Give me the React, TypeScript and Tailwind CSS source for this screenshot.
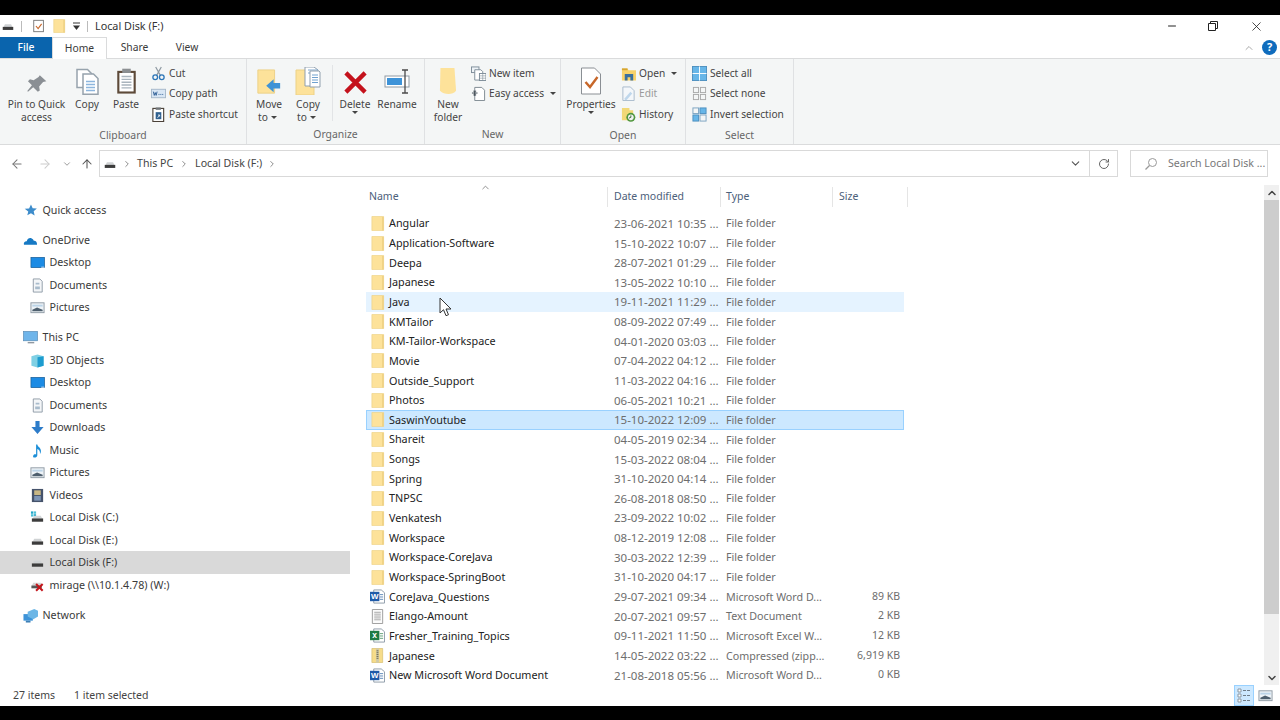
import { ArrowLeft, ArrowRight, ArrowUp, ChevronDown, ChevronRight, ChevronUp, Minus, RotateCw, X } from "lucide-react";

const files = [
  { name: "Angular", date: "23-06-2021 10:35 ...", type: "File folder", size: "", icon: "folder" },
  { name: "Application-Software", date: "15-10-2022 10:07 ...", type: "File folder", size: "", icon: "folder" },
  { name: "Deepa", date: "28-07-2021 01:29 ...", type: "File folder", size: "", icon: "folder" },
  { name: "Japanese", date: "13-05-2022 10:10 ...", type: "File folder", size: "", icon: "folder" },
  { name: "Java", date: "19-11-2021 11:29 ...", type: "File folder", size: "", icon: "folder" },
  { name: "KMTailor", date: "08-09-2022 07:49 ...", type: "File folder", size: "", icon: "folder" },
  { name: "KM-Tailor-Workspace", date: "04-01-2020 03:03 ...", type: "File folder", size: "", icon: "folder" },
  { name: "Movie", date: "07-04-2022 04:12 ...", type: "File folder", size: "", icon: "folder" },
  { name: "Outside_Support", date: "11-03-2022 04:16 ...", type: "File folder", size: "", icon: "folder" },
  { name: "Photos", date: "06-05-2021 10:21 ...", type: "File folder", size: "", icon: "folder" },
  { name: "SaswinYoutube", date: "15-10-2022 12:09 ...", type: "File folder", size: "", icon: "folder" },
  { name: "Shareit", date: "04-05-2019 02:34 ...", type: "File folder", size: "", icon: "folder" },
  { name: "Songs", date: "15-03-2022 08:04 ...", type: "File folder", size: "", icon: "folder" },
  { name: "Spring", date: "31-10-2020 04:14 ...", type: "File folder", size: "", icon: "folder" },
  { name: "TNPSC", date: "26-08-2018 08:50 ...", type: "File folder", size: "", icon: "folder" },
  { name: "Venkatesh", date: "23-09-2022 10:02 ...", type: "File folder", size: "", icon: "folder" },
  { name: "Workspace", date: "08-12-2019 12:08 ...", type: "File folder", size: "", icon: "folder" },
  { name: "Workspace-CoreJava", date: "30-03-2022 12:39 ...", type: "File folder", size: "", icon: "folder" },
  { name: "Workspace-SpringBoot", date: "31-10-2020 04:17 ...", type: "File folder", size: "", icon: "folder" },
  { name: "CoreJava_Questions", date: "29-07-2021 09:34 ...", type: "Microsoft Word D...", size: "89 KB", icon: "word" },
  { name: "Elango-Amount", date: "20-07-2021 09:57 ...", type: "Text Document", size: "2 KB", icon: "text" },
  { name: "Fresher_Training_Topics", date: "09-11-2021 11:50 ...", type: "Microsoft Excel W...", size: "12 KB", icon: "excel" },
  { name: "Japanese", date: "14-05-2022 03:22 ...", type: "Compressed (zipp...", size: "6,919 KB", icon: "zip" },
  { name: "New Microsoft Word Document", date: "21-08-2018 05:56 ...", type: "Microsoft Word D...", size: "0 KB", icon: "word" },
];

const nav = [
  { label: "Quick access", icon: "star", top: true },
  { gap: true },
  { label: "OneDrive", icon: "cloud", top: true },
  { label: "Desktop", icon: "desktop" },
  { label: "Documents", icon: "docs" },
  { label: "Pictures", icon: "pics" },
  { gap: true },
  { label: "This PC", icon: "pc", top: true },
  { label: "3D Objects", icon: "cube" },
  { label: "Desktop", icon: "desktop" },
  { label: "Documents", icon: "docs" },
  { label: "Downloads", icon: "down" },
  { label: "Music", icon: "music" },
  { label: "Pictures", icon: "pics" },
  { label: "Videos", icon: "video" },
  { label: "Local Disk (C:)", icon: "diskc" },
  { label: "Local Disk (E:)", icon: "disk" },
  { label: "Local Disk (F:)", icon: "disk", active: true },
  { label: "mirage (\\\\10.1.4.78) (W:)", icon: "netdisk" },
  { gap: true },
  { label: "Network", icon: "network", top: true },
];

function Glyph({ name, size = 16 }: { name: string; size?: number }) {
  const art: Record<string, React.ReactNode> = {
    folder: (
      <>
        <path d="M2 .5h12.500v15H2z" fill="#fde29a" stroke="#ecd186" strokeWidth=".7" />
        <path d="M13 1h1.500v14.500H13z" fill="#edcf80" />
      </>
    ),
    word: (
      <>
        <path d="M4 1h8l3.500 3v11H4z" fill="#fff" stroke="#8d9aa8" />
        <path d="M10.500 6h3.500M10.500 8.500h3.500M10.500 11h3.500" stroke="#5b86b8" />
        <rect x="0" y="3" width="10" height="10" fill="#1f5aa8" />
        <text x="5" y="11" fontSize="8.500" fontWeight="700" fill="#fff" textAnchor="middle" fontFamily="Liberation Sans, sans-serif">W</text>
      </>
    ),
    excel: (
      <>
        <path d="M4 1h8l3.500 3v11H4z" fill="#fff" stroke="#8d9aa8" />
        <path d="M10.500 6h3.500M10.500 8.500h3.500M10.500 11h3.500" stroke="#5e9e75" />
        <rect x="0" y="3" width="10" height="10" fill="#1d7a43" />
        <text x="5" y="11" fontSize="9" fontWeight="700" fill="#fff" textAnchor="middle" fontFamily="Liberation Sans, sans-serif">x</text>
      </>
    ),
    text: (
      <>
        <path d="M2.500 .5h11v15h-11z" fill="#fbfbfb" stroke="#9a9a9a" />
        <path d="M4.500 3.500h7M4.500 5.500h7M4.500 7.500h7M4.500 9.500h7M4.500 11.500h7" stroke="#a5a5a5" />
      </>
    ),
    zip: (
      <>
        <path d="M2 .5h11.500v15H2z" fill="#f6dc8a" stroke="#d5bb6a" strokeWidth=".7" />
        <path d="M6.500 .5h3v15h-3z" fill="#cfc9a8" />
        <path d="M7 3h2M7 5h2M7 7h2M7 9h2M7 11h2" stroke="#6f6a4c" />
      </>
    ),
    star: (
      <path d="M8.500 1.500l1.800 4 4.500.400-3.400 3 1 4.500-3.900-2.400L4.600 13l1-4L1.800 6l4.700-.2z" fill="#3d8ccb" />
    ),
    cloud: <path d="M1 12.500c-.6-2.500 1-4 3-3.800C4.800 6 7 4.800 9.300 5.800c1.300.5 2 1.500 2.200 2.500 2-.3 3.600 1.200 3.500 4.200z" fill="#1679c4" />,
    desktop: (
      <>
        <rect x="1" y="2.500" width="14.500" height="11" fill="#1c8be4" stroke="#14578f" strokeWidth=".7" />
        <path d="M12 13h3" stroke="#dfeaf4" />
      </>
    ),
    docs: (
      <>
        <path d="M3.500 1h7l2.500 2.500V15h-9.500z" fill="#f4f6f8" stroke="#8f9ba6" />
        <path d="M6 5h4v2H6zM5.500 9h5v3h-5z" fill="#a8bbcc" />
      </>
    ),
    pics: (
      <>
        <rect x="1" y="3" width="14" height="10.500" fill="#eef3f7" stroke="#8d99a3" />
        <path d="M2.500 10.500l5-2.500 6 2.500v1.500h-11z" fill="#4e5f6e" />
        <path d="M2.500 5h11v2h-11z" fill="#bcd4e8" />
      </>
    ),
    pc: (
      <>
        <rect x="0.500" y="1.500" width="15" height="10" fill="#6fb5ea" stroke="#5789b2" strokeWidth=".7" />
        <path d="M5 13.500h7" stroke="#8f98a1" strokeWidth="1.500" />
      </>
    ),
    cube: (
      <>
        <path d="M1.500 3.500L8 1.500l6.500 2v10L8 15.500l-6.500-2z" fill="#7fd0e4" />
        <path d="M8 4.500l6.500-1v10L8 15.500z" fill="#1d9ccf" />
      </>
    ),
    down: <path d="M5.800 1h4.400v6.500h4.300L8 15 1.500 7.500h4.300z" fill="#2d7cc9" />,
    music: <path d="M6.500 1.500h1.300c.5 2.800 4.500 3.400 3.800 8-.2 1-.7 1.800-1 2.200.4-2.600-.6-4.500-2.800-5.300V13c0 1.500-1.500 2.500-3 2.500S3 14.500 3.500 13.300c.5-1.200 2-1.500 3-1z" fill="#1d8fd8" />,
    video: (
      <>
        <rect x="2" y="1" width="12" height="14" fill="#46536b" />
        <rect x="4.500" y="2.500" width="7" height="5" fill="#c8b784" />
        <rect x="4.500" y="8.500" width="7" height="5" fill="#7d95b6" />
      </>
    ),
    disk: (
      <>
        <path d="M3 9l1.500-3h7L13 9z" fill="#cfd2d4" />
        <rect x="2" y="9" width="12" height="3.500" fill="#3c3c3c" />
      </>
    ),
    diskc: (
      <>
        <rect x="1" y="1.500" width="2.500" height="2.500" fill="#21a7c9" />
        <rect x="4" y="1.500" width="2.500" height="2.500" fill="#4cc0d6" />
        <rect x="1" y="4.500" width="2.500" height="2.500" fill="#4cc0d6" />
        <rect x="4" y="4.500" width="2.500" height="2.500" fill="#21a7c9" />
        <path d="M3 9l1.500-3h7L13 9z" fill="#d3d6d8" />
        <rect x="2" y="9" width="12" height="3.500" fill="#3c3c3c" />
      </>
    ),
    netdisk: (
      <>
        <path d="M2 8l1.500-3h8L13 8z" fill="#d7d7d7" />
        <rect x="1.500" y="8" width="11" height="3" fill="#575757" />
        <path d="M6.500 6.500l7 7M13.500 6.500l-7 7" stroke="#c4161c" strokeWidth="2.200" />
      </>
    ),
    network: (
      <>
        <rect x="0.500" y="6.500" width="10" height="7" fill="#3d93d8" />
        <path d="M3 13.500h5v2H3z" fill="#3d7fb5" />
        <path d="M5 4l7-3 4 2v6l-5 3-6-3z" fill="#6cb6e6" />
      </>
    ),
    pin: <path d="M10.500 1l5 4.500-2.500.500-3 3.500.500 3-1.500 1-3.500-3.500-4 3.500-.500-.500 3.500-4.500L1.500 5.500 3 4l2.800.800 3.800-2.500z" fill="#8a8f94" />,
    copy: (
      <>
        <path d="M2 1h7l3 3v9H2z" fill="#fff" stroke="#97a3ad" />
        <path d="M6 5h7l3 3v10.500H6z" fill="#fff" stroke="#97a3ad" transform="translate(0 -1)" />
        <path d="M8 10h6v1H8zM8 12h6v1H8zM8 14h6v1H8zM8 8h6v1H8z" fill="#8db6de" transform="translate(0 .5)" />
      </>
    ),
    paste: (
      <>
        <rect x="1.500" y="2" width="13" height="16" fill="#5d4a39" />
        <rect x="3" y="3.500" width="10" height="13" fill="#fff" />
        <rect x="5" y="0.500" width="6" height="3" fill="#8b8f92" />
        <path d="M4.500 6h7M4.500 8h7M4.500 10h7M4.500 12h7M4.500 14h7" stroke="#a9b4bd" />
      </>
    ),
    cut: (
      <>
        <path d="M5 1l5 9M11 1L6 10" stroke="#8f9aa3" strokeWidth="1.300" fill="none" />
        <circle cx="4.500" cy="12" r="2.500" fill="none" stroke="#2c76b8" strokeWidth="1.400" />
        <circle cx="11.500" cy="12" r="2.500" fill="none" stroke="#2c76b8" strokeWidth="1.400" />
      </>
    ),
    copypath: (
      <>
        <rect x="0.500" y="3.500" width="15" height="9" fill="#d8e6f4" stroke="#a4b7c9" />
        <path d="M2.500 6l1 4 1-3 1 3 1-4" stroke="#2f5f95" fill="none" />
        <path d="M8 9h1M10 9h1M12 9h1" stroke="#2f5f95" />
      </>
    ),
    shortcut: (
      <>
        <rect x="2" y="1.500" width="11.500" height="14" fill="#fff" stroke="#4a4038" strokeWidth="1.200" />
        <rect x="5" y="0.500" width="5.500" height="2.500" fill="#6f7478" />
        <rect x="5" y="5.500" width="6" height="7.500" fill="#31618f" />
        <path d="M7 11.500l2-3M7.500 8.500H9.200v1.700" stroke="#fff" fill="none" strokeWidth=".8" />
      </>
    ),
    moveto: (
      <>
        <path d="M1 1h18v25H1z" fill="#fde29a" stroke="#ecd186" />
        <path d="M10 18l8-7v4h7v6h-7v4z" fill="#3f93d6" />
      </>
    ),
    copyto: (
      <>
        <path d="M1 3h18v25H1z" fill="#fde29a" stroke="#ecd186" />
        <path d="M10 0h9l4 3v16H10z" fill="#fff" stroke="#8f9fae" />
        <path d="M13 3h10M13 6h10" stroke="#7ea7cd" />
        <path d="M15 4h9l1 1v15H15z" fill="#fff" stroke="#8f9fae" />
        <path d="M17 8h6M17 10.500h6M17 13h6M17 15.500h6" stroke="#6fa1cf" />
      </>
    ),
    del: <path d="M3 3l20 20M23 3L3 23" stroke="#c4121c" strokeWidth="4.500" />,
    rename: (
      <>
        <rect x="1" y="9" width="24" height="11" fill="#fff" stroke="#8f9aa3" />
        <rect x="3" y="11" width="15" height="7" fill="#3d93d8" />
        <path d="M21 3v23M18 3h6M18 26h6" stroke="#4b4b4b" strokeWidth="1.300" />
      </>
    ),
    newfolder: <path d="M2 1h13l1.500 21c-3 4-11 4-15 0z" fill="#fde29a" />,
    newitem: (
      <>
        <rect x="0.500" y="1" width="8" height="6" fill="#eef3f7" stroke="#7d8c98" />
        <path d="M4 4h6.500l2 2v9H4z" fill="#fff" stroke="#7d8c98" />
        <rect x="9" y="8" width="7" height="7.500" fill="#fff" stroke="#7d8c98" />
        <path d="M9 10.500h7M9 13h7M12.500 8v7.500" stroke="#7d8c98" strokeWidth=".6" />
      </>
    ),
    easy: (
      <>
        <path d="M4 1.500h7.500l3 3V15.500H4z" fill="#fff" stroke="#7b868f" />
        <path d="M1 7.500h6M2.500 5.500h3M2.500 9.500h3M4 5.500v5" stroke="#3f4a52" />
      </>
    ),
    props: (
      <>
        <path d="M1 1h13l6 6v20H1z" fill="#fff" stroke="#8a8f94" />
        <path d="M5 15l4.500 5L17 10" stroke="#c7672a" strokeWidth="2.400" fill="none" />
      </>
    ),
    open: (
      <>
        <path d="M1 3h6l1 1.500h8v11H1z" fill="#f7d26b" />
        <path d="M1 2.500h6v2H1z" fill="#d6a630" />
        <path d="M4 8.500h9v7h-3v-3.500H7v3.500H4z" fill="#3a6f9e" />
      </>
    ),
    edit: (
      <>
        <path d="M2 1h8l4 4v10.500H2z" fill="#f4f7fa" stroke="#a8bacb" />
        <path d="M4 13l6-7 2 2-6 7H4z" fill="#bfd7ec" />
      </>
    ),
    history: (
      <>
        <path d="M1 1h8v2.500h4V14H1z" fill="#f1d877" />
        <circle cx="10.500" cy="11" r="4.800" fill="#52983f" />
        <circle cx="10.500" cy="11" r="3" fill="#f2f2f2" />
        <path d="M10.500 9v2l-2 .8" stroke="#33622a" fill="none" />
      </>
    ),
    selall: (
      <>
        <rect x="0.500" y="0.500" width="15" height="15" fill="#67b6e8" stroke="#4d8fbf" />
        <path d="M8 .5v15M.5 8h15" stroke="#fff" />
      </>
    ),
    selnone: (
      <>
        <rect x="1.500" y="1.500" width="5.500" height="5.500" fill="none" stroke="#a9a9a9" />
        <rect x="9" y="1.500" width="5.500" height="5.500" fill="none" stroke="#a9a9a9" />
        <rect x="1.500" y="9" width="5.500" height="5.500" fill="none" stroke="#a9a9a9" />
        <rect x="9" y="9" width="5.500" height="5.500" fill="none" stroke="#a9a9a9" />
      </>
    ),
    invert: (
      <>
        <rect x="1" y="1" width="6" height="6" fill="none" stroke="#7aa2c0" />
        <rect x="8.500" y="1" width="6.500" height="6" fill="#67b6e8" stroke="#4d8fbf" />
        <rect x="1" y="8.500" width="6" height="6.500" fill="#67b6e8" stroke="#4d8fbf" />
        <rect x="8.500" y="8.500" width="6.500" height="6.500" fill="none" stroke="#7aa2c0" />
      </>
    ),
    check: (
      <>
        <rect x="2" y="1.500" width="11" height="13" fill="#fff" stroke="#6f6f6f" />
        <path d="M4.500 8l2.500 3 4-5.500" stroke="#c7672a" strokeWidth="1.300" fill="none" />
      </>
    ),
  };
  const boxes: Record<string, string> = {
    moveto: "0 0 26 28",
    copyto: "0 0 26 28",
    del: "0 0 26 26",
    rename: "0 0 26 28",
    newfolder: "0 0 18 26",
    props: "0 0 21 28",
    copy: "0 0 18 18",
    paste: "0 0 16 19",
  };
  return (
    <svg width={size} height={size} viewBox={boxes[name] ?? "0 0 16 16"} className="shrink-0">
      {art[name]}
    </svg>
  );
}

function IconSlot({ icon, size }: { icon: string; size: number }) {
  return (
    <div className="h-[39px] pb-[3px] flex items-end justify-center">
      <Glyph name={icon} size={size} />
    </div>
  );
}

function Big({ icon, size, lines, w, caret }: { icon: string; size: number; lines: string[]; w: string; caret?: boolean }) {
  return (
    <div className={`${w} shrink-0 flex flex-col items-center`}>
      <IconSlot icon={icon} size={size} />
      {lines.map((l) => (
        <div key={l} className="h-[13px] leading-[13px] whitespace-nowrap flex items-center">{l}</div>
      ))}
      {caret && <Caret />}
    </div>
  );
}

function Caret() {
  return <span className="inline-block w-0 h-0 border-x-[3px] border-x-transparent border-t-[3px] border-t-[#444] mx-[3px]" />;
}

function Small({ icon, label, caret, dim }: { icon: string; label: string; caret?: boolean; dim?: boolean }) {
  return (
    <div className={`h-[20.500px] flex items-center gap-[3px] whitespace-nowrap ${dim ? "text-[#9a9a9a]" : ""}`}>
      <Glyph name={icon} size={15} />
      <span>{label}</span>
      {caret && <Caret />}
    </div>
  );
}

function Group({ w, label, children }: { w: string; label: string; children: React.ReactNode }) {
  return (
    <div className={`${w} shrink-0 border-r border-[#dfe1e3] flex flex-col`}>
      <div className="h-[67px] flex items-start">{children}</div>
      <div className="text-center text-[#666] text-[10.400px] leading-[21px]">{label}</div>
    </div>
  );
}

export default function App() {
  return (
    <div className="w-[1280px] h-[720px] overflow-hidden bg-white flex flex-col relative text-[10.800px] text-[#3a3a3a] font-['Noto_Sans',sans-serif]">
      <div className="h-[15px] bg-black shrink-0" />

      {/* title bar */}
      <div className="h-[22px] shrink-0 flex items-center relative">
        <div className="ml-[1px] w-[14px]"><Glyph name="disk" size={14} /></div>
        <div className="ml-[6px] w-px h-[11px] bg-[#bbb]" />
        <div className="ml-[10px]"><Glyph name="check" size={14} /></div>
        <div className="ml-[6px]"><Glyph name="folder" size={14} /></div>
        <svg width="9" height="9" viewBox="0 0 9 9" className="ml-[6px]">
          <path d="M1 1h7" stroke="#333" />
          <path d="M1 3.500h7L4.500 8z" fill="#333" />
        </svg>
        <div className="ml-[6px] w-px h-[11px] bg-[#bbb]" />
        <div className="ml-[7px] text-[#333]">Local Disk (F:)</div>
        <div className="ml-auto flex items-center text-[#222]">
          <Minus size={12} className="mr-[30px]" />
          <svg width="10" height="10" viewBox="0 0 10 10" className="mr-[31px]">
            <path d="M.5 2.500h7v7h-7zM2.500 2.500v-2h7v7h-2" fill="none" stroke="#222" />
          </svg>
          <X size={15} strokeWidth={1.300} className="mr-[16px]" />
        </div>
      </div>

      {/* tabs */}
      <div className="h-[22px] shrink-0 flex items-stretch border-b border-[#dadbdc] relative text-[10.300px]">
        <div className="w-[52px] bg-[#0a64ad] text-white font-medium flex items-center justify-center">File</div>
        <div className="w-[55px] bg-white border-x border-t border-[#dadbdc] -mb-px flex items-center justify-center">Home</div>
        <div className="w-[55px] flex items-center justify-center">Share</div>
        <div className="w-[50px] flex items-center justify-center">View</div>
        <div className="ml-auto flex items-center">
          <ChevronUp size={12} className="text-[#aaa] mr-[7px]" />
          <div className="w-[15px] h-[15px] rounded-full bg-[#0f6cbd] text-white text-[11px] font-bold flex items-center justify-center mr-[3px]">?</div>
        </div>
      </div>

      {/* ribbon */}
      <div className="h-[86px] shrink-0 bg-[#f4f6f6] border-b border-[#dadbdc] flex text-[#444] text-[10.200px]">
        <Group w="w-[247px]" label="Clipboard">
          <Big icon="pin" size={21} lines={["Pin to Quick", "access"]} w="w-[73px]" />
          <Big icon="copy" size={27} lines={["Copy"]} w="w-[28px]" />
          <Big icon="paste" size={27} lines={["Paste"]} w="w-[50px]" />
          <div className="pt-[4px]">
            <Small icon="cut" label="Cut" />
            <Small icon="copypath" label="Copy path" />
            <Small icon="shortcut" label="Paste shortcut" />
          </div>
        </Group>
        <Group w="w-[178px]" label="Organize">
          <div className="w-[44px] shrink-0 flex flex-col items-center">
            <IconSlot icon="moveto" size={26} />
            <div className="h-[13px] leading-[13px]">Move</div>
            <div className="h-[13px] leading-[13px] flex items-center">to<Caret /></div>
          </div>
          <div className="w-[34px] shrink-0 flex flex-col items-center">
            <IconSlot icon="copyto" size={28} />
            <div className="h-[13px] leading-[13px]">Copy</div>
            <div className="h-[13px] leading-[13px] flex items-center">to<Caret /></div>
          </div>
          <div className="w-[8px] shrink-0 h-[56px] mt-[6px] border-r border-[#e2e4e6]" />
          <Big icon="del" size={25} lines={["Delete"]} w="w-[44px]" caret />
          <Big icon="rename" size={28} lines={["Rename"]} w="w-[40px]" />
        </Group>
        <Group w="w-[136px]" label="New">
          <Big icon="newfolder" size={28} lines={["New", "folder"]} w="w-[46px]" />
          <div className="pt-[4px]">
            <Small icon="newitem" label="New item" />
            <Small icon="easy" label="Easy access" caret />
          </div>
        </Group>
        <Group w="w-[125px]" label="Open">
          <Big icon="props" size={28} lines={["Properties"]} w="w-[60px]" caret />
          <div className="pt-[4px]">
            <Small icon="open" label="Open" caret />
            <Small icon="edit" label="Edit" dim />
            <Small icon="history" label="History" />
          </div>
        </Group>
        <Group w="w-[108px]" label="Select">
          <div className="pt-[4px] pl-[6px]">
            <Small icon="selall" label="Select all" />
            <Small icon="selnone" label="Select none" />
            <Small icon="invert" label="Invert selection" />
          </div>
        </Group>
      </div>

      {/* address bar */}
      <div className="h-[40px] shrink-0 flex items-start pt-[5px] text-[10.600px]">
        <div className="w-[99px] h-[27px] flex items-center text-[#777]">
          <ArrowLeft size={14} strokeWidth={1.800} className="ml-[10px]" />
          <ArrowRight size={14} strokeWidth={1.800} className="ml-[14px] text-[#ccc]" />
          <ChevronDown size={10} strokeWidth={2} className="ml-[10px] text-[#888]" />
          <ArrowUp size={14} strokeWidth={1.800} className="ml-[8px] text-[#555]" />
        </div>
        <div className="w-[1019px] h-[27px] border border-[#d9d9d9] flex items-center text-[#444]">
          <div className="ml-[3px]"><Glyph name="disk" size={14} /></div>
          <ChevronRight size={10} className="ml-[5px] text-[#777]" />
          <span className="ml-[5px]">This PC</span>
          <ChevronRight size={10} className="ml-[6px] text-[#777]" />
          <span className="ml-[6px]">Local Disk (F:)</span>
          <ChevronRight size={10} className="ml-[5px] text-[#777]" />
          <ChevronDown size={13} strokeWidth={2} className="ml-auto mr-[7px] text-[#555]" />
          <div className="w-[28px] h-full border-l border-[#d9d9d9] flex items-center justify-center">
            <RotateCw size={12} strokeWidth={2} className="text-[#666]" />
          </div>
        </div>
        <div className="ml-[12px] w-[138px] h-[27px] border border-[#d9d9d9] flex items-center text-[#777]">
          <svg width="14" height="14" viewBox="0 0 14 14" className="ml-[13px] shrink-0">
            <circle cx="8.500" cy="5.500" r="4" fill="none" stroke="#999" />
            <path d="M5.500 8.500L1.500 12.500" stroke="#999" strokeWidth="1.200" />
          </svg>
          <span className="ml-[10px] whitespace-nowrap">Search Local Disk ...</span>
        </div>
      </div>

      {/* main */}
      <div className="flex-1 min-h-0 flex">
        <div className="w-[350px] shrink-0 pt-[13.750px] text-[#3a3a3a] text-[10.700px]">
          {nav.map((n, i) =>
            n.gap ? (
              <div key={i} className="h-[7.500px]" />
            ) : (
              <div key={i} className={`h-[22.500px] flex items-center ${n.top ? "pl-[23px]" : "pl-[30px]"} ${n.active ? "bg-[#d9d9d9]" : ""}`}>
                <Glyph name={n.icon as string} size={15} />
                <span className="ml-[4.500px] whitespace-nowrap">{n.label}</span>
              </div>
            )
          )}
        </div>

        <div className="flex-1 min-w-0 relative pt-[2px]">
          <div className="ml-[16px] h-[20px] flex text-[#4c607a] text-[10.500px]">
            <div className="w-[242px] pl-[3px] border-r border-[#e5e5e5] flex items-center">Name</div>
            <div className="w-[113px] pl-[6px] border-r border-[#e5e5e5] flex items-center">Date modified</div>
            <div className="w-[112px] pl-[5px] border-r border-[#e5e5e5] flex items-center">Type</div>
            <div className="w-[75px] pl-[6px] border-r border-[#e5e5e5] flex items-center">Size</div>
          </div>
          <ChevronUp size={11} className="absolute left-[130px] top-[-3px] text-[#888]" />
          <div className="mt-[6.700px] ml-[16px] w-[538px]">
            {files.map((f, i) => (
              <div
                key={i}
                className={`h-[19.650px] flex items-center ${
                  f.name === "SaswinYoutube" ? "bg-[#cce8ff] outline outline-1 outline-[#99d1ff] -outline-offset-1" : f.name === "Java" ? "bg-[#e5f3ff]" : ""
                }`}
              >
                <div className="w-[248px] pl-[4px] flex items-center text-[#222]">
                  <Glyph name={f.icon} size={15} />
                  <span className="ml-[4px] whitespace-nowrap">{f.name}</span>
                </div>
                <div className="w-[112px] text-[11.500px] text-[#6d6d6d] whitespace-nowrap">{f.date}</div>
                <div className="w-[108px] text-[10.700px] text-[#6d6d6d] whitespace-nowrap">{f.type}</div>
                <div className="w-[66px] text-right text-[10.500px] text-[#6d6d6d] whitespace-nowrap">{f.size}</div>
              </div>
            ))}
          </div>

          {/* mouse pointer */}
          <svg width="14" height="20" viewBox="0 0 14 20" className="absolute left-[89px] top-[112px]">
            <path d="M1 1v15l3.500-3.300 2.500 6 2.500-1-2.500-5.700H12z" fill="#fff" stroke="#333" strokeWidth="1" />
          </svg>
        </div>

        <div className="w-[15px] mr-px shrink-0 bg-[#f0f0f0] flex flex-col items-center">
          <div className="h-[15px] flex items-center"><ChevronUp size={12} strokeWidth={3} className="text-[#444]" /></div>
          <div className="w-full h-[414px] bg-[#cdcdcd]" />
          <div className="mt-auto h-[15px] flex items-center"><ChevronDown size={12} strokeWidth={3} className="text-[#444]" /></div>
        </div>
      </div>

      {/* status bar */}
      <div className="h-[21px] shrink-0 flex items-center text-[#444] text-[10.500px]">
        <span className="ml-[13px] w-[61px]">27 items</span>
        <span>1 item selected</span>
        <div className="ml-auto mr-[5px] flex items-center">
          <div className="w-[20px] h-[21px] bg-[#cce8ff] border border-[#99d1ff] flex items-center justify-center">
            <svg width="15" height="15" viewBox="0 0 15 15">
              <path d="M1 1h3v3H1zM1 6h3v3H1zM1 11h3v3H1z" fill="#fff" stroke="#8a97a3" />
              <path d="M6 2.500h8M6 7.500h8M6 12.500h8" stroke="#6f7c88" strokeDasharray="3 1" />
            </svg>
          </div>
          <div className="w-[20px] flex items-center justify-center ml-px">
            <Glyph name="pics" size={15} />
          </div>
        </div>
      </div>

      <div className="h-[14px] shrink-0 bg-black" />
    </div>
  );
}
